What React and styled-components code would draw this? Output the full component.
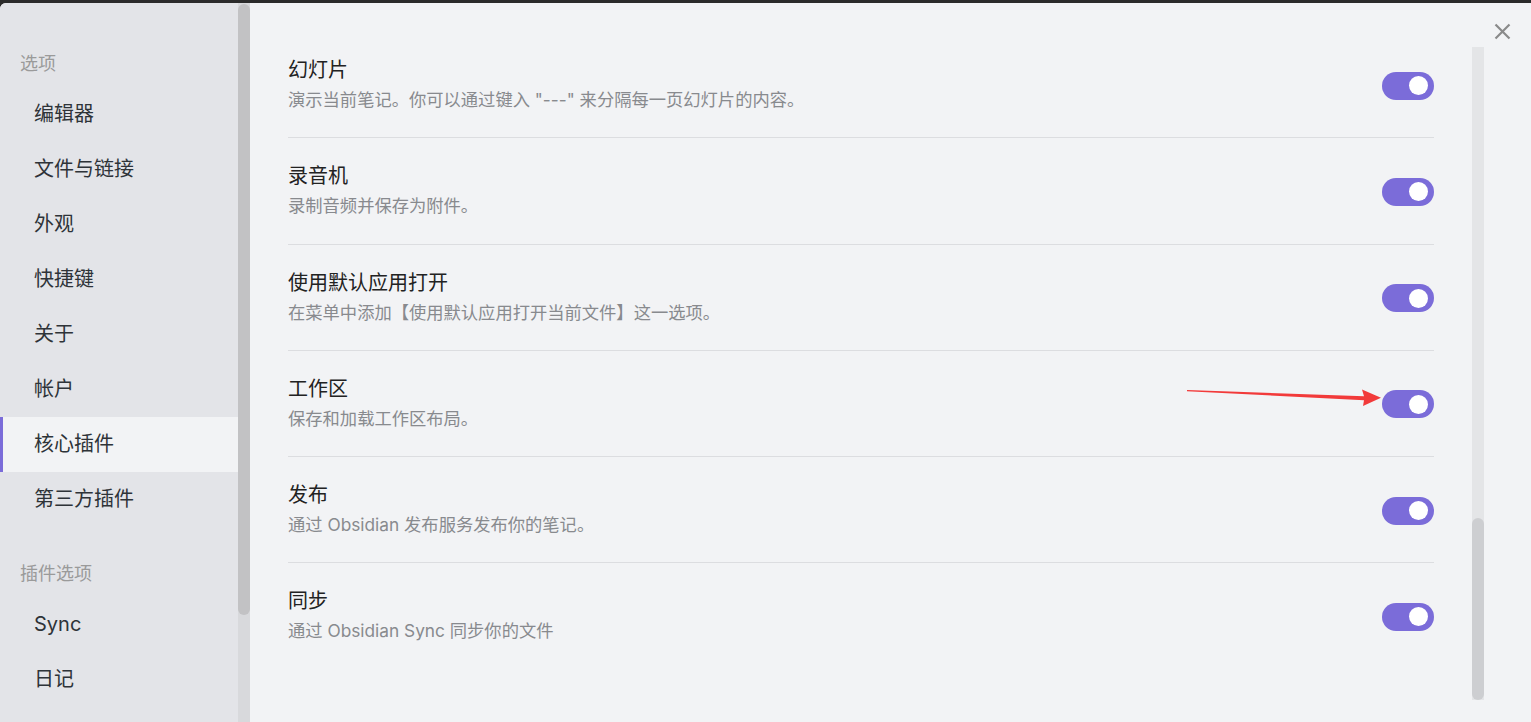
import React from "react";
import styled, { createGlobalStyle } from "styled-components";

const GlobalStyle = createGlobalStyle`
  html, body, #root {
    margin: 0;
    padding: 0;
    width: 100%;
    height: 100%;
    overflow: hidden;
  }
  body {
    background: #2b2b2b;
    font-family: "Inter", "Noto Sans CJK SC", sans-serif;
  }
`;

const Modal = styled.div`
  position: relative;
  margin-top: 3px;
  height: calc(100% - 3px);
  display: flex;
  background: #f2f3f5;
  border-top-left-radius: 6px;
  overflow: hidden;
`;

const Sidebar = styled.div`
  width: 250px;
  flex-shrink: 0;
  display: flex;
  background: #e3e4e8;
`;

const Nav = styled.nav`
  width: 238px;
  padding-top: 46px;
  display: flex;
  flex-direction: column;
`;

const NavHeader = styled.div`
  padding-left: 20px;
  height: 30px;
  line-height: 30px;
  font-size: 18px;
  color: #9a9a9a;
  margin-top: ${(p) => (p.first ? 0 : 32)}px;
  margin-bottom: 8px;
`;

const NavItem = styled.div`
  height: 55px;
  line-height: 55px;
  padding-left: 34px;
  font-size: 20px;
  color: #2e3338;
  background: ${(p) => (p.active ? "#f2f3f5" : "transparent")};
  box-shadow: ${(p) => (p.active ? "inset 3px 0 0 #7b6cd9" : "none")};
`;

const Track = styled.div`
  width: 12px;
  display: flex;
  flex-direction: column;
  background: ${(p) => p.bg};
  margin-top: ${(p) => p.top}px;
  margin-bottom: ${(p) => p.bottom}px;
  padding-top: ${(p) => p.thumbTop}px;
`;

const Thumb = styled.div`
  height: ${(p) => p.h}px;
  border-radius: 6px;
  background: ${(p) => p.color};
`;

const Main = styled.div`
  flex: 1;
  display: flex;
  padding-top: 29px;
`;

const Content = styled.div`
  width: 1146px;
  margin-left: 38px;
  display: flex;
  flex-direction: column;
`;

const Row = styled.div`
  display: flex;
  align-items: center;
  padding: 24px 0 23.25px;
  border-top: ${(p) => (p.first ? "none" : "1px solid #dcdde0")};
`;

const Info = styled.div`
  flex: 1;
`;

const Title = styled.div`
  font-size: 20px;
  line-height: 28px;
  color: #222;
`;

const Desc = styled.div`
  margin-top: 2px;
  font-size: 17.3px;
  line-height: 28px;
  color: #888a8e;
`;

const Toggle = styled.div`
  width: 52px;
  height: 28px;
  border-radius: 14px;
  background: #7b6cd9;
  display: flex;
  align-items: center;
  justify-content: flex-end;
  padding-right: 6px;
  box-sizing: border-box;
  margin-top: 1px;
`;

const Knob = styled.div`
  width: 19px;
  height: 19px;
  border-radius: 50%;
  background: #fff;
`;

const ScrollCol = styled.div`
  margin-left: 38px;
  display: flex;
  flex-direction: column;
`;

const Close = styled.div`
  position: absolute;
  top: 20px;
  right: 20px;
  width: 17px;
  height: 17px;
  display: flex;
`;

const Arrow = styled.svg`
  position: absolute;
  left: 0;
  top: -3px;
  pointer-events: none;
`;

const nav1 = ["编辑器", "文件与链接", "外观", "快捷键", "关于", "帐户", "核心插件", "第三方插件"];
const nav2 = ["Sync", "日记"];

const rows = [
  ["幻灯片", "演示当前笔记。你可以通过键入 \"---\" 来分隔每一页幻灯片的内容。"],
  ["录音机", "录制音频并保存为附件。"],
  ["使用默认应用打开", "在菜单中添加【使用默认应用打开当前文件】这一选项。"],
  ["工作区", "保存和加载工作区布局。"],
  ["发布", "通过 Obsidian 发布服务发布你的笔记。"],
  ["同步", "通过 Obsidian Sync 同步你的文件"],
];

export default function App() {
  return (
    <>
      <GlobalStyle />
      <Modal>
        <Sidebar>
          <Nav>
            <NavHeader first>选项</NavHeader>
            {nav1.map((n) => (
              <NavItem key={n} active={n === "核心插件"}>{n}</NavItem>
            ))}
            <NavHeader>插件选项</NavHeader>
            {nav2.map((n) => (
              <NavItem key={n}>{n}</NavItem>
            ))}
          </Nav>
          <Track bg="#d8d9dc" top={0} bottom={0} thumbTop={1}>
            <Thumb h={611} color="#c2c2c4" />
          </Track>
        </Sidebar>
        <Main>
          <Content>
            {rows.map(([t, d], i) => (
              <Row key={t} first={i === 0}>
                <Info>
                  <Title>{t}</Title>
                  <Desc>{d}</Desc>
                </Info>
                <Toggle>
                  <Knob />
                </Toggle>
              </Row>
            ))}
          </Content>
          <ScrollCol>
            <Track bg="#e4e5e7" top={15} bottom={19} thumbTop={471}>
              <Thumb h={182} color="#cdced1" />
            </Track>
          </ScrollCol>
        </Main>
        <Close>
          <svg width="17" height="17" viewBox="0 0 17 17">
            <path d="M1.5 1.5 L15.5 15.5 M15.5 1.5 L1.5 15.5" stroke="#8a8a8a" strokeWidth="2.2" strokeLinecap="butt" />
          </svg>
        </Close>
        <Arrow width="1531" height="722" viewBox="0 0 1531 722">
          <polygon
            points="1187,390 1364,396.2 1362,389.5 1381,397.8 1363,406 1364,400.2 1187,391.3"
            fill="#f23a3a"
          />
        </Arrow>
      </Modal>
    </>
  );
}
